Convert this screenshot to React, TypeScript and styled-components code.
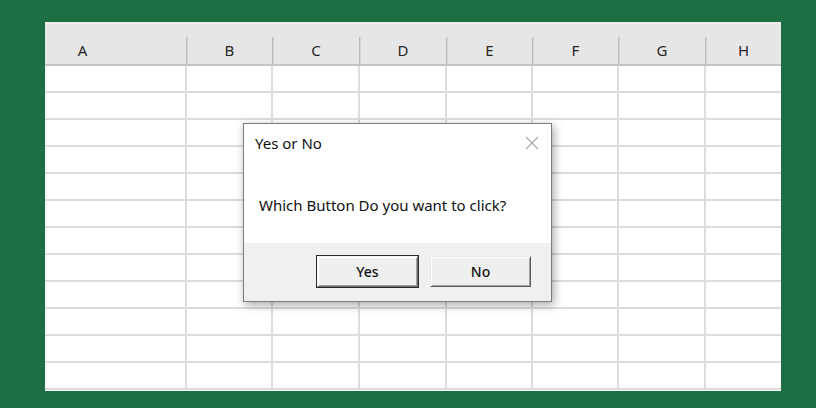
import * as React from "react";
import styled, { createGlobalStyle } from "styled-components";

const GlobalStyle = createGlobalStyle`
  html, body {
    margin: 0;
    padding: 0;
    background: #1e6e43;
  }
  body {
    font-family: "Noto Sans", "Open Sans", sans-serif;
  }
`;

const Page = styled.div`
  width: 816px;
  height: 408px;
  box-sizing: border-box;
  padding: 22px 35px 17px 45px;
  background: #1e6e43;
`;

const Sheet = styled.div`
  position: relative;
  width: 736px;
  height: 369px;
  overflow: hidden;
  background: #fff;
  display: flex;
  flex-direction: column;
`;

const TopStrip = styled.div`
  height: 15px;
  flex: none;
  background: #e6e6e6;
  border-top: 2px solid #ececec;
  box-sizing: border-box;
`;

const COLS = "142px 86px 87px 87px 86px 86px 87px 1fr";

const HeaderRow = styled.div`
  display: grid;
  grid-template-columns: ${COLS};
  height: 27px;
  flex: none;
  background: #e6e6e6;
  border-bottom: 2px solid #c4c4c4;
`;

const HeaderCell = styled.div<{ $shift?: number }>`
  display: flex;
  align-items: center;
  justify-content: center;
  font-size: 15px;
  color: #262626;
  padding-bottom: 2px;
  padding-right: ${(p) => p.$shift ?? 0}px;
  border-right: 1px solid #b9b9b9;
  box-shadow: 1px 0 0 #d6d6d6;
  &:last-child {
    border-right: none;
    box-shadow: none;
  }
`;

const Row = styled.div`
  display: grid;
  grid-template-columns: ${COLS};
  height: 27px;
  flex: none;
  box-sizing: border-box;
  border-bottom: 2px solid #dcdcdc;
`;

const Cell = styled.div`
  border-right: 2px solid #dcdcdc;
  &:last-child {
    border-right: none;
  }
`;

const Dialog = styled.div`
  position: absolute;
  left: 198px;
  top: 101px;
  width: 309px;
  height: 179px;
  box-sizing: border-box;
  border: 1px solid #7d7d7d;
  background: #f0f0f0;
  box-shadow: 2px 3px 9px rgba(0, 0, 0, 0.35);
  display: flex;
  flex-direction: column;
  font-family: "Noto Sans", "Open Sans", sans-serif;
`;

const Body = styled.div`
  background: #fff;
  height: 119px;
  display: flex;
  flex-direction: column;
`;

const TitleBar = styled.div`
  display: flex;
  align-items: center;
  justify-content: space-between;
  height: 38px;
  padding: 0 12px 0 11px;
`;

const Title = styled.span`
  font-size: 15px;
  color: #111;
`;

const Close = styled.svg`
  width: 14px;
  height: 14px;
`;

const Message = styled.div`
  margin-top: 33px;
  padding-left: 15px;
  font-size: 15px;
  color: #111;
`;

const Footer = styled.div`
  flex: 1;
  display: flex;
  justify-content: flex-end;
  align-items: flex-start;
  gap: 12px;
  padding: 13px 20px 0 0;
`;

const Button = styled.button<{ $default?: boolean }>`
  width: 101px;
  height: 31px;
  box-sizing: border-box;
  background: #efefef;
  font-family: "Noto Sans", "Open Sans", sans-serif;
  font-size: 14px;
  font-weight: 500;
  color: #111;
  padding: 0;
  border-style: solid;
  border-width: 1px;
  border-color: #e8e8e8 #5a5a5a #5a5a5a #e8e8e8;
  box-shadow: inset 1px 1px 0 #ffffff, inset -1px -1px 0 #a0a0a0;
  outline: ${(p) => (p.$default ? "1px solid #2b2b2b" : "none")};
  outline-offset: 0;
  ${(p) =>
    p.$default &&
    `
    border-color: #f4f4f4 #6a6a6a #6a6a6a #f4f4f4;
  `}
`;

const columns = ["A", "B", "C", "D", "E", "F", "G", "H"];
const rows = Array.from({ length: 12 }, (_, i) => i);

export default function App() {
  return (
    <>
      <GlobalStyle />
      <Page>
        <Sheet>
          <TopStrip />
          <HeaderRow>
            {columns.map((c) => (
              <HeaderCell key={c} $shift={c === "A" ? 66 : 0}>
                {c}
              </HeaderCell>
            ))}
          </HeaderRow>
          {rows.map((r) => (
            <Row key={r}>
              {columns.map((c) => (
                <Cell key={c} />
              ))}
            </Row>
          ))}

          <Dialog>
            <Body>
              <TitleBar>
                <Title>Yes or No</Title>
                <Close viewBox="0 0 14 14">
                  <path d="M1 1 L13 13 M13 1 L1 13" stroke="#a8a8a8" strokeWidth="1.1" fill="none" />
                </Close>
              </TitleBar>
              <Message>Which Button Do you want to click?</Message>
            </Body>
            <Footer>
              <Button $default>Yes</Button>
              <Button>No</Button>
            </Footer>
          </Dialog>
        </Sheet>
      </Page>
    </>
  );
}
